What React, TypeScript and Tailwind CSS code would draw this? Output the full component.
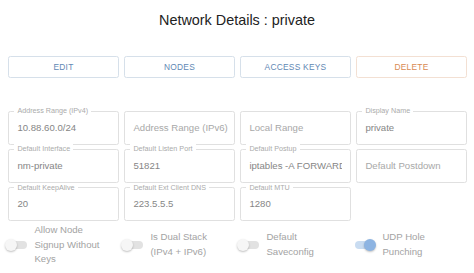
import React from 'react';

type Field = { label?: string; value?: string; placeholder?: string };

const fields: (Field | null)[] = [
  { label: 'Address Range (IPv4)', value: '10.88.60.0/24' },
  { placeholder: 'Address Range (IPv6)' },
  { placeholder: 'Local Range' },
  { label: 'Display Name', value: 'private' },
  { label: 'Default Interface', value: 'nm-private' },
  { label: 'Default Listen Port', value: '51821' },
  { label: 'Default Postup', value: 'iptables -A FORWARD' },
  { placeholder: 'Default Postdown' },
  { label: 'Default KeepAlive', value: '20' },
  { label: 'Default Ext Client DNS', value: '223.5.5.5' },
  { label: 'Default MTU', value: '1280' },
  null,
];

const toggles = [
  { label: 'Allow Node Signup Without Keys', on: false },
  { label: 'Is Dual Stack (IPv4 + IPv6)', on: false },
  { label: 'Default Saveconfig', on: false },
  { label: 'UDP Hole Punching', on: true },
];

function OutlinedField({ field }: { field: Field }) {
  return (
    <div className="relative h-[33.6px] rounded-[2.4px] border border-[#e0e0e0] flex items-center px-[8.4px]">
      {field.label && (
        <span className="absolute left-[5.4px] top-[-5.6px] px-[3px] bg-white text-[7.2px] leading-[10px] text-[#ababab] whitespace-nowrap">
          {field.label}
        </span>
      )}
      {field.value ? (
        <span className="block w-full overflow-hidden whitespace-nowrap text-[9.6px] leading-[13.8px] text-[#868686]">
          {field.value}
        </span>
      ) : (
        <span className="block whitespace-nowrap text-[9.6px] leading-[13.8px] text-[#a8a8a8]">
          {field.placeholder}
        </span>
      )}
    </div>
  );
}

function Toggle({ on }: { on: boolean }) {
  return (
    <span className="relative block w-[34.8px] h-[22.8px] shrink-0">
      <span
        className={
          'absolute left-[7.2px] top-[7.2px] w-[20.4px] h-[8.4px] rounded-full ' +
          (on ? 'bg-[#c9dcf1]' : 'bg-[#e2e2e2]')
        }
      />
      <span
        className={
          'absolute top-[5.4px] w-[12px] h-[12px] rounded-full shadow-[0_1px_2px_rgba(0,0,0,0.25)] ' +
          (on ? 'left-[16.4px] bg-[#8db4e2]' : 'left-[5.4px] bg-[#f6f6f6]')
        }
      />
    </span>
  );
}

export default function App() {
  const buttons = [
    { text: 'EDIT', danger: false },
    { text: 'NODES', danger: false },
    { text: 'ACCESS KEYS', danger: false },
    { text: 'DELETE', danger: true },
  ];

  return (
    <div
      className="w-[474px] h-[273px] bg-white overflow-hidden"
      style={{ fontFamily: '"Liberation Sans", Arial, sans-serif' }}
    >
      <h5 className="pt-[10.8px] text-center text-[14.4px] leading-[19.2px] text-[#222]">
        Network Details : private
      </h5>

      <div className="mt-[26px] grid grid-cols-4 gap-x-[5px] pl-[8px] pr-[7px]">
        {buttons.map((b) => (
          <button
            key={b.text}
            className={
              'h-[21.9px] rounded-[2.4px] border text-[8.4px] tracking-[0.02857em] uppercase flex items-center justify-center ' +
              (b.danger
                ? 'border-[#f3e0d3] text-[#d98a52]'
                : 'border-[#d6e0ea] text-[#5f88b4]')
            }
          >
            {b.text}
          </button>
        ))}
      </div>

      <div className="mt-[33.1px] grid grid-cols-4 gap-x-[5px] gap-y-[4.5px] pl-[8px] pr-[7px]">
        {fields.map((f, i) => (f ? <OutlinedField key={i} field={f} /> : <div key={i} />))}
      </div>

      <div className="mt-[2.4px] grid grid-cols-4 gap-x-[5px] pl-[8px] pr-[7px]">
        {toggles.map((t) => (
          <div key={t.label} className="flex items-center ml-[-8.4px] mr-[9.6px]">
            <Toggle on={t.on} />
            <span className="text-[9.6px] leading-[14.4px] text-[#a3a3a3]">{t.label}</span>
          </div>
        ))}
      </div>
    </div>
  );
}
